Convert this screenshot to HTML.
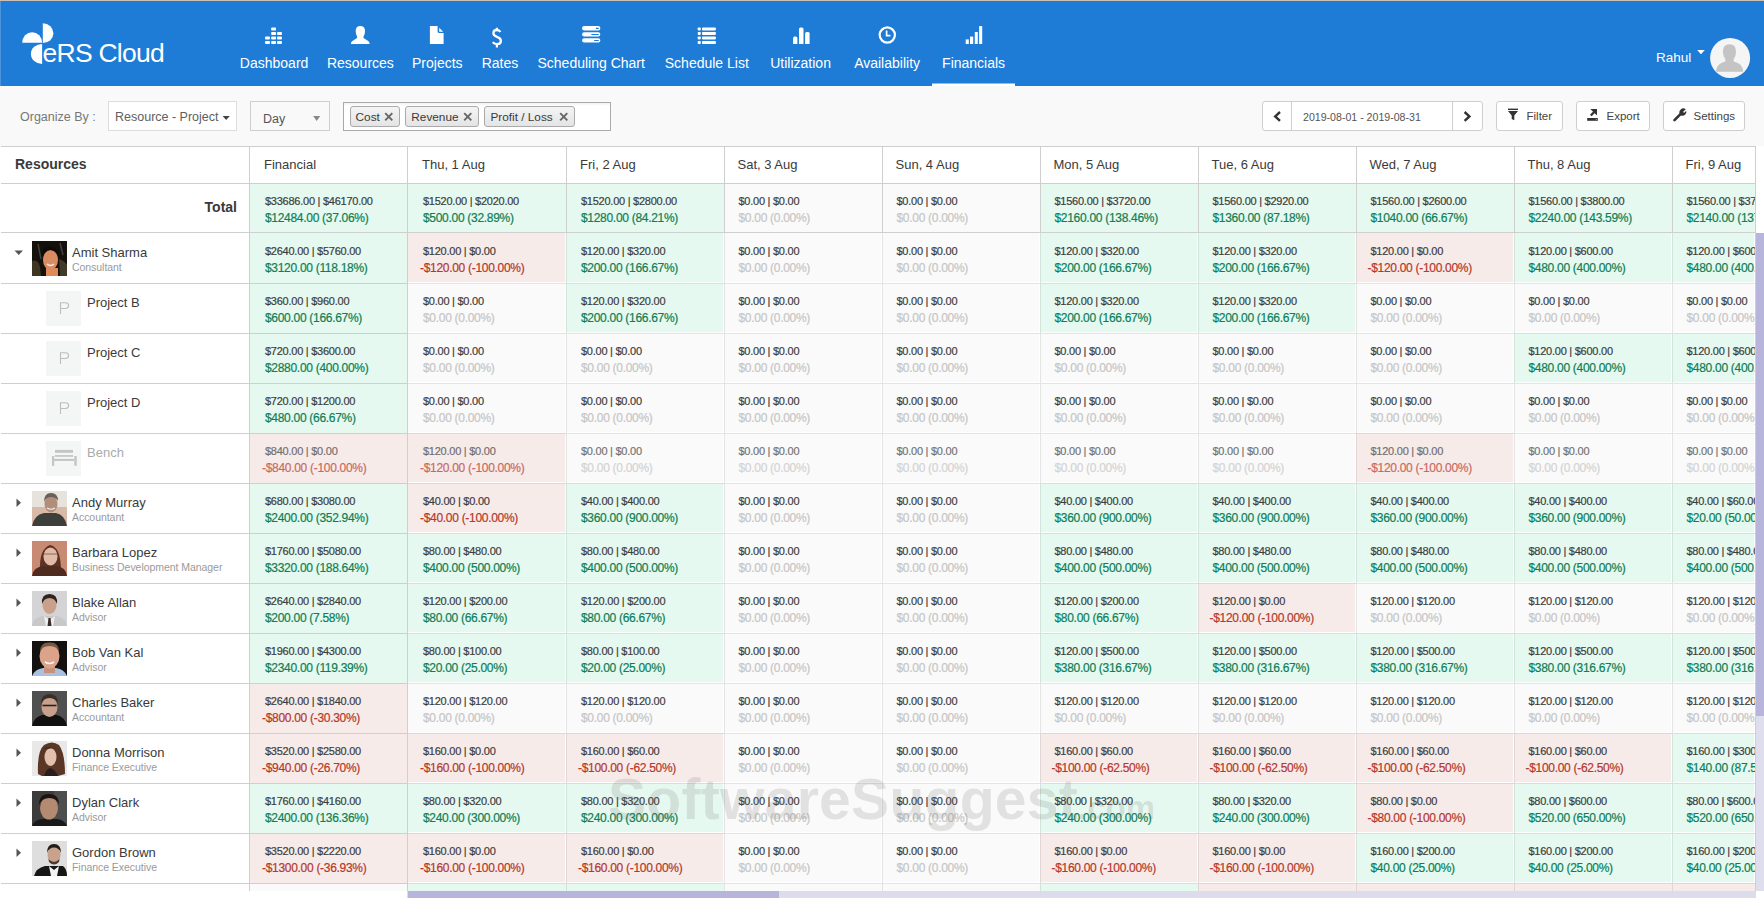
<!DOCTYPE html><html><head><meta charset="utf-8"><style>
*{box-sizing:border-box;margin:0;padding:0}
html,body{width:1764px;height:898px;overflow:hidden;background:#fff;font-family:"Liberation Sans",sans-serif}
.a{position:absolute}
#top{left:0;top:0;width:1764px;height:1px;background:#cdbfb6}
#hdr{left:0;top:1px;width:1764px;height:85px;background:#1e7bd6}
.nav{position:absolute;top:55px;color:#fff;font-size:14px;white-space:nowrap;line-height:16px}
.ico{position:absolute}
#tb{left:0;top:86px;width:1764px;height:60px;background:#f9f9f9}
.tx{position:absolute;white-space:nowrap}
.ln{position:absolute;background:#cfcfcf}
.c{position:absolute;overflow:hidden}
.G{background:#e6f9f0}
.R{background:#f7ebea}
.N{background:#fafafa}
.l1{position:absolute;-webkit-text-stroke:0.2px currentColor;left:15px;top:12px;font-size:11px;line-height:13px;letter-spacing:-0.25px;color:#3d3d3d;white-space:nowrap}
.l2{position:absolute;-webkit-text-stroke:0.2px currentColor;left:15px;top:28px;font-size:12px;line-height:14px;letter-spacing:-0.3px;white-space:nowrap}
.G .l2{color:#0c7f55}
.R .l2{color:#b5382b}
.N .l2{color:#c6c6c6}
.hd{position:absolute;top:156.5px;font-size:13px;line-height:16px;color:#3a3a3a;white-space:nowrap}
.nm{position:absolute;left:72px;font-size:13px;line-height:15px;color:#3a3a3a;white-space:nowrap}
.ti{position:absolute;left:72px;font-size:10.5px;letter-spacing:-0.05px;line-height:12px;color:#9a9a9a;white-space:nowrap}
.btn{position:absolute;top:101px;height:30px;background:#fff;border:1px solid #cfcfcf;border-radius:3px}
</style></head><body>
<div class="a" id="top"></div><div class="a" id="hdr"></div><div class="a" style="left:0;top:1px;width:1px;height:85px;background:#4b94dc"></div>
<svg class="a" style="left:0;top:0" width="200" height="86" viewBox="0 0 200 86"><path d="M42.8 23.3 A10.6 9.9 0 0 1 42.8 43.1 Z" fill="#fff"/><path d="M22.2 42.8 A9.95 10.6 0 0 1 42.1 42.8 Z" fill="#fff"/><path d="M42.1 43.9 A11.2 10.05 0 0 0 42.1 64 Z" fill="#fff"/></svg>
<div class="tx" style="left:42.5px;top:38px;font-size:26.5px;line-height:30px;color:#fff;letter-spacing:-0.75px">eRS Cloud</div>
<div class="nav" style="left:194.10000000000002px;width:160px;text-align:center">Dashboard</div>
<div class="nav" style="left:280.4px;width:160px;text-align:center">Resources</div>
<div class="nav" style="left:357.3px;width:160px;text-align:center">Projects</div>
<div class="nav" style="left:420px;width:160px;text-align:center">Rates</div>
<div class="nav" style="left:511.20000000000005px;width:160px;text-align:center">Scheduling Chart</div>
<div class="nav" style="left:626.8px;width:160px;text-align:center">Schedule List</div>
<div class="nav" style="left:720.6px;width:160px;text-align:center">Utilization</div>
<div class="nav" style="left:807.1px;width:160px;text-align:center">Availability</div>
<div class="nav" style="left:893.6px;width:160px;text-align:center">Financials</div>
<svg class="a" style="left:0;top:0" width="1764" height="86" viewBox="0 0 1764 86"><rect x="265.1" y="41.1" width="4.8" height="2.9" rx="0.7" fill="#fff"/><rect x="265.1" y="36.5" width="4.8" height="2.9" rx="0.7" fill="#fff"/><rect x="271.2" y="41.1" width="4.8" height="2.9" rx="0.7" fill="#fff"/><rect x="271.2" y="36.5" width="4.8" height="2.9" rx="0.7" fill="#fff"/><rect x="271.2" y="32" width="4.8" height="2.9" rx="0.7" fill="#fff"/><rect x="271.2" y="27.5" width="4.8" height="2.9" rx="0.7" fill="#fff"/><rect x="277.1" y="41.1" width="4.8" height="2.9" rx="0.7" fill="#fff"/><rect x="277.1" y="36.5" width="4.8" height="2.9" rx="0.7" fill="#fff"/><rect x="277.1" y="32" width="4.8" height="2.9" rx="0.7" fill="#fff"/><path d="M355.7 31 Q355.7 25.9 360.3 25.9 Q365 25.9 365 31 Q365 35 363.5 36.4 L363.5 38 L368.2 40.9 Q369.6 41.9 369.6 44 L350.9 44 Q350.9 41.9 352.4 40.9 L357.1 38 L357.1 36.4 Q355.7 35 355.7 31 Z" fill="#fff"/><path d="M429.9 25.9 H437.6 V31.6 Q437.6 33 439 33 H443.6 V43.9 H429.9 Z" fill="#fff"/><path d="M439.2 27.7 L443.2 31.8 L439.2 31.8 Z" fill="#fff"/><rect x="582.1" y="26.1" width="18.2" height="4.3" rx="2" fill="#fff"/><rect x="582.1" y="32.3" width="18.2" height="4.3" rx="2" fill="#fff"/><rect x="582.1" y="38.3" width="18.2" height="4.3" rx="2" fill="#fff"/><rect x="595.8" y="27.7" width="3.1" height="1.2" rx=".6" fill="#1e7bd6"/><rect x="591.2" y="33.9" width="7.7" height="1.2" rx=".6" fill="#1e7bd6"/><rect x="594" y="39.9" width="4.9" height="1.2" rx=".6" fill="#1e7bd6"/><rect x="697.7" y="27.5" width="3.1" height="2.9" rx=".8" fill="#fff"/><rect x="702" y="27.5" width="13.9" height="2.9" rx=".8" fill="#fff"/><rect x="697.7" y="32" width="3.1" height="2.9" rx=".8" fill="#fff"/><rect x="702" y="32" width="13.9" height="2.9" rx=".8" fill="#fff"/><rect x="697.7" y="36.5" width="3.1" height="2.9" rx=".8" fill="#fff"/><rect x="702" y="36.5" width="13.9" height="2.9" rx=".8" fill="#fff"/><rect x="697.7" y="41.1" width="3.1" height="2.9" rx=".8" fill="#fff"/><rect x="702" y="41.1" width="13.9" height="2.9" rx=".8" fill="#fff"/><path d="M793.1 44 V38 Q793.1 36.5 794.6 36.5 H795.9 Q797.4 36.5 797.4 38 V44 Z" fill="#fff"/><path d="M799 44 V28.9 Q799 27.4 800.5 27.4 H802 Q803.5 27.4 803.5 28.9 V44 Z" fill="#fff"/><path d="M805.1 44 V33.5 Q805.1 32 806.6 32 H808.1 Q809.6 32 809.6 33.5 V44 Z" fill="#fff"/><circle cx="887.3" cy="35" r="7.6" fill="none" stroke="#fff" stroke-width="2.2"/><path d="M886.6 30.4 L886.6 35.6 L890.5 35.6" fill="none" stroke="#fff" stroke-width="1.7"/><rect x="965.7" y="39.4" width="3.1" height="4.6" fill="#fff"/><rect x="970" y="36.6" width="3.2" height="7.4" fill="#fff"/><rect x="974.8" y="32" width="3" height="12" fill="#fff"/><rect x="979.1" y="26.1" width="3.1" height="17.9" fill="#fff"/><rect x="932" y="83.5" width="83" height="2.5" fill="#fff"/><path d="M1697.2 50 L1704.8 50 L1701 54.2 Z" fill="#fff"/><circle cx="1730.1" cy="57.9" r="20" fill="#f5f5f5"/><path d="M1722.9 51.5 Q1722.9 44.2 1729.5 44.2 Q1736 44.2 1736 51.5 Q1736 56.5 1733.5 59.5 L1733.8 61.5 Q1743 63.5 1743.2 71.7 L1716 71.7 Q1716.2 63.5 1725.2 61.5 L1725.5 59.5 Q1722.9 56.5 1722.9 51.5 Z" fill="#c4c4c4"/></svg>
<div class="tx" style="left:1726px;top:31px;width:10px;height:14px;font-size:19px;line-height:20px;color:#fff;text-align:center"></div>
<svg class="a" style="left:0;top:0" width="1764" height="86"><path d="M500.4 32 Q499.2 30 496.9 30 Q493.4 30 493.4 33.3 Q493.4 35.6 497 36.8 Q500.9 38.1 500.9 41 Q500.9 44.1 497 44.1 Q494.2 44.1 492.8 42.1" fill="none" stroke="#fff" stroke-width="2.3"/><path d="M496.9 27.8 V30.5 M496.9 43.5 V47.6" stroke="#fff" stroke-width="2.2"/></svg>
<div class="tx" style="left:1656px;top:50px;font-size:13.5px;line-height:16px;color:#fff">Rahul</div>
<div class="a" id="tb"></div>
<div class="tx" style="left:20px;top:109px;font-size:12.5px;line-height:16px;color:#777">Organize By :</div>
<div class="a" style="left:108px;top:101px;width:129px;height:30px;background:#fff;border:1px solid #ddd"></div>
<div class="tx" style="left:115px;top:109px;font-size:12.5px;line-height:16px;color:#606060">Resource - Project</div>
<div class="a" style="left:250px;top:101px;width:80px;height:30px;border:1px solid #cfcfcf;background:#f9f9f9"></div>
<div class="tx" style="left:263px;top:111px;font-size:12.5px;line-height:16px;color:#555">Day</div>
<svg class="a" style="left:0;top:0" width="1764" height="146"><path d="M222.6 116 L229.8 116 L226.2 120 Z" fill="#444"/><path d="M313.2 116 L320.2 116 L316.7 121 Z" fill="#888"/></svg>
<div class="a" style="left:343px;top:102px;width:268px;height:29px;border:1px solid #aaa;background:linear-gradient(#f0f0f0 0,#fff 3px)"></div>
<div class="a" style="left:349.6px;top:106px;width:50.099999999999966px;height:21px;border:1px solid #aaa;border-radius:3px;background:linear-gradient(#f4f4f4,#e4e4e4)"></div>
<div class="tx" style="left:355.6px;top:109px;font-size:11.8px;line-height:16px;color:#3a3a3a">Cost</div>
<svg class="a" style="left:384.2px;top:112px" width="10" height="10"><path d="M1.2 1.2 L8.3 8.3 M8.3 1.2 L1.2 8.3" stroke="#666" stroke-width="1.9"/></svg>
<div class="a" style="left:405.3px;top:106px;width:73.5px;height:21px;border:1px solid #aaa;border-radius:3px;background:linear-gradient(#f4f4f4,#e4e4e4)"></div>
<div class="tx" style="left:411.3px;top:109px;font-size:11.8px;line-height:16px;color:#3a3a3a">Revenue</div>
<svg class="a" style="left:463.3px;top:112px" width="10" height="10"><path d="M1.2 1.2 L8.3 8.3 M8.3 1.2 L1.2 8.3" stroke="#666" stroke-width="1.9"/></svg>
<div class="a" style="left:484.4px;top:106px;width:90.20000000000005px;height:21px;border:1px solid #aaa;border-radius:3px;background:linear-gradient(#f4f4f4,#e4e4e4)"></div>
<div class="tx" style="left:490.4px;top:109px;font-size:11.8px;line-height:16px;color:#3a3a3a">Profit / Loss</div>
<svg class="a" style="left:559.1px;top:112px" width="10" height="10"><path d="M1.2 1.2 L8.3 8.3 M8.3 1.2 L1.2 8.3" stroke="#666" stroke-width="1.9"/></svg>
<div class="a" style="left:1262px;top:101px;width:221px;height:30px;border:1px solid #cfcfcf;border-radius:3px;background:#fff"></div>
<div class="a" style="left:1291px;top:101px;width:1px;height:30px;background:#cfcfcf"></div>
<div class="a" style="left:1452px;top:101px;width:1px;height:30px;background:#cfcfcf"></div>
<svg class="a" style="left:0;top:0" width="1764" height="146"><path d="M1280 112 L1275.2 116.4 L1280 120.8" fill="none" stroke="#333" stroke-width="2.4"/><path d="M1464.6 112 L1469.4 116.4 L1464.6 120.8" fill="none" stroke="#333" stroke-width="2.4"/></svg>
<div class="tx" style="left:1303px;top:110px;font-size:10.6px;line-height:14px;color:#555">2019-08-01 - 2019-08-31</div>
<div class="btn" style="left:1496px;width:67px"></div>
<div class="tx" style="left:1526.5px;top:108px;font-size:11.5px;line-height:16px;color:#444">Filter</div>
<div class="btn" style="left:1576px;width:74px"></div>
<div class="tx" style="left:1606.5px;top:108px;font-size:11.5px;line-height:16px;color:#444">Export</div>
<div class="btn" style="left:1663px;width:82px"></div>
<div class="tx" style="left:1693.5px;top:108px;font-size:11.5px;line-height:16px;color:#444">Settings</div>
<svg class="a" style="left:0;top:0" width="1764" height="146"><rect x="1508" y="108.6" width="10" height="1.4" fill="#333"/><path d="M1508 111 L1518 111 L1514.3 115.5 L1514.3 120.3 L1511.7 119 L1511.7 115.5 Z" fill="#333"/><rect x="1587.2" y="118" width="10.6" height="2.8" fill="#333"/><circle cx="1596.3" cy="119.4" r=".7" fill="#999"/><path d="M1590.3 109.1 L1597 109.1 L1597 115.6 Z" fill="#333"/><path d="M1595 111.2 L1590.8 115.5" stroke="#333" stroke-width="2.3"/><path d="M1674.5 120.2 L1681 113.7" stroke="#333" stroke-width="2.6" stroke-linecap="round"/><path d="M1680 114.5 A4 4 0 0 1 1685.8 109.2 L1683.2 111.8 L1684 113 L1686.3 110.8 A4 4 0 0 1 1681 115.5 Z" fill="#333"/></svg>
<div class="c G" style="left:250px;top:184px;width:157px;height:48px"><div class="l1" style="left:15px;top:11px">$33686.00 | $46170.00</div><div class="l2" style="left:15px;top:27px">$12484.00 (37.06%)</div></div>
<div class="c G" style="left:408px;top:184px;width:158px;height:48px"><div class="l1" style="left:15px;top:11px">$1520.00 | $2020.00</div><div class="l2" style="left:15px;top:27px">$500.00 (32.89%)</div></div>
<div class="c G" style="left:567px;top:184px;width:157px;height:48px"><div class="l1" style="left:14px;top:11px">$1520.00 | $2800.00</div><div class="l2" style="left:14px;top:27px">$1280.00 (84.21%)</div></div>
<div class="c N" style="left:725px;top:184px;width:157px;height:48px"><div class="l1" style="left:13.5px;top:11px">$0.00 | $0.00</div><div class="l2" style="left:13.5px;top:27px">$0.00 (0.00%)</div></div>
<div class="c N" style="left:883px;top:184px;width:157px;height:48px"><div class="l1" style="left:13.5px;top:11px">$0.00 | $0.00</div><div class="l2" style="left:13.5px;top:27px">$0.00 (0.00%)</div></div>
<div class="c G" style="left:1041px;top:184px;width:157px;height:48px"><div class="l1" style="left:13.5px;top:11px">$1560.00 | $3720.00</div><div class="l2" style="left:13.5px;top:27px">$2160.00 (138.46%)</div></div>
<div class="c G" style="left:1199px;top:184px;width:157px;height:48px"><div class="l1" style="left:13.5px;top:11px">$1560.00 | $2920.00</div><div class="l2" style="left:13.5px;top:27px">$1360.00 (87.18%)</div></div>
<div class="c G" style="left:1357px;top:184px;width:157px;height:48px"><div class="l1" style="left:13.5px;top:11px">$1560.00 | $2600.00</div><div class="l2" style="left:13.5px;top:27px">$1040.00 (66.67%)</div></div>
<div class="c G" style="left:1515px;top:184px;width:157px;height:48px"><div class="l1" style="left:13.5px;top:11px">$1560.00 | $3800.00</div><div class="l2" style="left:13.5px;top:27px">$2240.00 (143.59%)</div></div>
<div class="c G" style="left:1673px;top:184px;width:82px;height:48px"><div class="l1" style="left:13.5px;top:11px">$1560.00 | $3700.00</div><div class="l2" style="left:13.5px;top:27px">$2140.00 (137.18%)</div></div>
<div class="c G" style="left:250px;top:233px;width:157px;height:50px"><div class="l1" style="left:15px;top:12px">$2640.00 | $5760.00</div><div class="l2" style="left:15px;top:28px">$3120.00 (118.18%)</div></div>
<div class="c R" style="left:407px;top:232px;width:159px;height:51px;border-left:1px solid rgba(0,0,0,.085);border-top:1px solid rgba(0,0,0,.085);box-shadow:inset -1px -1px 0 rgba(255,255,255,.85)"><div class="l1" style="left:15px;top:12px">$120.00 | $0.00</div><div class="l2" style="left:12px;top:28px">-$120.00 (-100.00%)</div></div>
<div class="c G" style="left:566px;top:232px;width:158px;height:51px;border-left:1px solid rgba(0,0,0,.085);border-top:1px solid rgba(0,0,0,.085);box-shadow:inset -1px -1px 0 rgba(255,255,255,.85)"><div class="l1" style="left:14px;top:12px">$120.00 | $320.00</div><div class="l2" style="left:14px;top:28px">$200.00 (166.67%)</div></div>
<div class="c N" style="left:724px;top:232px;width:158px;height:51px;border-left:1px solid rgba(0,0,0,.085);border-top:1px solid rgba(0,0,0,.085);box-shadow:inset -1px -1px 0 rgba(255,255,255,.85)"><div class="l1" style="left:13.5px;top:12px">$0.00 | $0.00</div><div class="l2" style="left:13.5px;top:28px">$0.00 (0.00%)</div></div>
<div class="c N" style="left:882px;top:232px;width:158px;height:51px;border-left:1px solid rgba(0,0,0,.085);border-top:1px solid rgba(0,0,0,.085);box-shadow:inset -1px -1px 0 rgba(255,255,255,.85)"><div class="l1" style="left:13.5px;top:12px">$0.00 | $0.00</div><div class="l2" style="left:13.5px;top:28px">$0.00 (0.00%)</div></div>
<div class="c G" style="left:1040px;top:232px;width:158px;height:51px;border-left:1px solid rgba(0,0,0,.085);border-top:1px solid rgba(0,0,0,.085);box-shadow:inset -1px -1px 0 rgba(255,255,255,.85)"><div class="l1" style="left:13.5px;top:12px">$120.00 | $320.00</div><div class="l2" style="left:13.5px;top:28px">$200.00 (166.67%)</div></div>
<div class="c G" style="left:1198px;top:232px;width:158px;height:51px;border-left:1px solid rgba(0,0,0,.085);border-top:1px solid rgba(0,0,0,.085);box-shadow:inset -1px -1px 0 rgba(255,255,255,.85)"><div class="l1" style="left:13.5px;top:12px">$120.00 | $320.00</div><div class="l2" style="left:13.5px;top:28px">$200.00 (166.67%)</div></div>
<div class="c R" style="left:1356px;top:232px;width:158px;height:51px;border-left:1px solid rgba(0,0,0,.085);border-top:1px solid rgba(0,0,0,.085);box-shadow:inset -1px -1px 0 rgba(255,255,255,.85)"><div class="l1" style="left:13.5px;top:12px">$120.00 | $0.00</div><div class="l2" style="left:10.5px;top:28px">-$120.00 (-100.00%)</div></div>
<div class="c G" style="left:1514px;top:232px;width:158px;height:51px;border-left:1px solid rgba(0,0,0,.085);border-top:1px solid rgba(0,0,0,.085);box-shadow:inset -1px -1px 0 rgba(255,255,255,.85)"><div class="l1" style="left:13.5px;top:12px">$120.00 | $600.00</div><div class="l2" style="left:13.5px;top:28px">$480.00 (400.00%)</div></div>
<div class="c G" style="left:1672px;top:232px;width:83px;height:51px;border-left:1px solid rgba(0,0,0,.085);border-top:1px solid rgba(0,0,0,.085);box-shadow:inset -1px -1px 0 rgba(255,255,255,.85)"><div class="l1" style="left:13.5px;top:12px">$120.00 | $600.00</div><div class="l2" style="left:13.5px;top:28px">$480.00 (400.00%)</div></div>
<div class="c G" style="left:250px;top:284px;width:157px;height:49px"><div class="l1" style="left:15px;top:11px">$360.00 | $960.00</div><div class="l2" style="left:15px;top:27px">$600.00 (166.67%)</div></div>
<div class="c N" style="left:407px;top:283px;width:159px;height:50px;border-left:1px solid rgba(0,0,0,.085);border-top:1px solid rgba(0,0,0,.085);box-shadow:inset -1px -1px 0 rgba(255,255,255,.85)"><div class="l1" style="left:15px;top:11px">$0.00 | $0.00</div><div class="l2" style="left:15px;top:27px">$0.00 (0.00%)</div></div>
<div class="c G" style="left:566px;top:283px;width:158px;height:50px;border-left:1px solid rgba(0,0,0,.085);border-top:1px solid rgba(0,0,0,.085);box-shadow:inset -1px -1px 0 rgba(255,255,255,.85)"><div class="l1" style="left:14px;top:11px">$120.00 | $320.00</div><div class="l2" style="left:14px;top:27px">$200.00 (166.67%)</div></div>
<div class="c N" style="left:724px;top:283px;width:158px;height:50px;border-left:1px solid rgba(0,0,0,.085);border-top:1px solid rgba(0,0,0,.085);box-shadow:inset -1px -1px 0 rgba(255,255,255,.85)"><div class="l1" style="left:13.5px;top:11px">$0.00 | $0.00</div><div class="l2" style="left:13.5px;top:27px">$0.00 (0.00%)</div></div>
<div class="c N" style="left:882px;top:283px;width:158px;height:50px;border-left:1px solid rgba(0,0,0,.085);border-top:1px solid rgba(0,0,0,.085);box-shadow:inset -1px -1px 0 rgba(255,255,255,.85)"><div class="l1" style="left:13.5px;top:11px">$0.00 | $0.00</div><div class="l2" style="left:13.5px;top:27px">$0.00 (0.00%)</div></div>
<div class="c G" style="left:1040px;top:283px;width:158px;height:50px;border-left:1px solid rgba(0,0,0,.085);border-top:1px solid rgba(0,0,0,.085);box-shadow:inset -1px -1px 0 rgba(255,255,255,.85)"><div class="l1" style="left:13.5px;top:11px">$120.00 | $320.00</div><div class="l2" style="left:13.5px;top:27px">$200.00 (166.67%)</div></div>
<div class="c G" style="left:1198px;top:283px;width:158px;height:50px;border-left:1px solid rgba(0,0,0,.085);border-top:1px solid rgba(0,0,0,.085);box-shadow:inset -1px -1px 0 rgba(255,255,255,.85)"><div class="l1" style="left:13.5px;top:11px">$120.00 | $320.00</div><div class="l2" style="left:13.5px;top:27px">$200.00 (166.67%)</div></div>
<div class="c N" style="left:1356px;top:283px;width:158px;height:50px;border-left:1px solid rgba(0,0,0,.085);border-top:1px solid rgba(0,0,0,.085);box-shadow:inset -1px -1px 0 rgba(255,255,255,.85)"><div class="l1" style="left:13.5px;top:11px">$0.00 | $0.00</div><div class="l2" style="left:13.5px;top:27px">$0.00 (0.00%)</div></div>
<div class="c N" style="left:1514px;top:283px;width:158px;height:50px;border-left:1px solid rgba(0,0,0,.085);border-top:1px solid rgba(0,0,0,.085);box-shadow:inset -1px -1px 0 rgba(255,255,255,.85)"><div class="l1" style="left:13.5px;top:11px">$0.00 | $0.00</div><div class="l2" style="left:13.5px;top:27px">$0.00 (0.00%)</div></div>
<div class="c N" style="left:1672px;top:283px;width:83px;height:50px;border-left:1px solid rgba(0,0,0,.085);border-top:1px solid rgba(0,0,0,.085);box-shadow:inset -1px -1px 0 rgba(255,255,255,.85)"><div class="l1" style="left:13.5px;top:11px">$0.00 | $0.00</div><div class="l2" style="left:13.5px;top:27px">$0.00 (0.00%)</div></div>
<div class="c G" style="left:250px;top:334px;width:157px;height:49px"><div class="l1" style="left:15px;top:11px">$720.00 | $3600.00</div><div class="l2" style="left:15px;top:27px">$2880.00 (400.00%)</div></div>
<div class="c N" style="left:407px;top:333px;width:159px;height:50px;border-left:1px solid rgba(0,0,0,.085);border-top:1px solid rgba(0,0,0,.085);box-shadow:inset -1px -1px 0 rgba(255,255,255,.85)"><div class="l1" style="left:15px;top:11px">$0.00 | $0.00</div><div class="l2" style="left:15px;top:27px">$0.00 (0.00%)</div></div>
<div class="c N" style="left:566px;top:333px;width:158px;height:50px;border-left:1px solid rgba(0,0,0,.085);border-top:1px solid rgba(0,0,0,.085);box-shadow:inset -1px -1px 0 rgba(255,255,255,.85)"><div class="l1" style="left:14px;top:11px">$0.00 | $0.00</div><div class="l2" style="left:14px;top:27px">$0.00 (0.00%)</div></div>
<div class="c N" style="left:724px;top:333px;width:158px;height:50px;border-left:1px solid rgba(0,0,0,.085);border-top:1px solid rgba(0,0,0,.085);box-shadow:inset -1px -1px 0 rgba(255,255,255,.85)"><div class="l1" style="left:13.5px;top:11px">$0.00 | $0.00</div><div class="l2" style="left:13.5px;top:27px">$0.00 (0.00%)</div></div>
<div class="c N" style="left:882px;top:333px;width:158px;height:50px;border-left:1px solid rgba(0,0,0,.085);border-top:1px solid rgba(0,0,0,.085);box-shadow:inset -1px -1px 0 rgba(255,255,255,.85)"><div class="l1" style="left:13.5px;top:11px">$0.00 | $0.00</div><div class="l2" style="left:13.5px;top:27px">$0.00 (0.00%)</div></div>
<div class="c N" style="left:1040px;top:333px;width:158px;height:50px;border-left:1px solid rgba(0,0,0,.085);border-top:1px solid rgba(0,0,0,.085);box-shadow:inset -1px -1px 0 rgba(255,255,255,.85)"><div class="l1" style="left:13.5px;top:11px">$0.00 | $0.00</div><div class="l2" style="left:13.5px;top:27px">$0.00 (0.00%)</div></div>
<div class="c N" style="left:1198px;top:333px;width:158px;height:50px;border-left:1px solid rgba(0,0,0,.085);border-top:1px solid rgba(0,0,0,.085);box-shadow:inset -1px -1px 0 rgba(255,255,255,.85)"><div class="l1" style="left:13.5px;top:11px">$0.00 | $0.00</div><div class="l2" style="left:13.5px;top:27px">$0.00 (0.00%)</div></div>
<div class="c N" style="left:1356px;top:333px;width:158px;height:50px;border-left:1px solid rgba(0,0,0,.085);border-top:1px solid rgba(0,0,0,.085);box-shadow:inset -1px -1px 0 rgba(255,255,255,.85)"><div class="l1" style="left:13.5px;top:11px">$0.00 | $0.00</div><div class="l2" style="left:13.5px;top:27px">$0.00 (0.00%)</div></div>
<div class="c G" style="left:1514px;top:333px;width:158px;height:50px;border-left:1px solid rgba(0,0,0,.085);border-top:1px solid rgba(0,0,0,.085);box-shadow:inset -1px -1px 0 rgba(255,255,255,.85)"><div class="l1" style="left:13.5px;top:11px">$120.00 | $600.00</div><div class="l2" style="left:13.5px;top:27px">$480.00 (400.00%)</div></div>
<div class="c G" style="left:1672px;top:333px;width:83px;height:50px;border-left:1px solid rgba(0,0,0,.085);border-top:1px solid rgba(0,0,0,.085);box-shadow:inset -1px -1px 0 rgba(255,255,255,.85)"><div class="l1" style="left:13.5px;top:11px">$120.00 | $600.00</div><div class="l2" style="left:13.5px;top:27px">$480.00 (400.00%)</div></div>
<div class="c G" style="left:250px;top:384px;width:157px;height:49px"><div class="l1" style="left:15px;top:11px">$720.00 | $1200.00</div><div class="l2" style="left:15px;top:27px">$480.00 (66.67%)</div></div>
<div class="c N" style="left:407px;top:383px;width:159px;height:50px;border-left:1px solid rgba(0,0,0,.085);border-top:1px solid rgba(0,0,0,.085);box-shadow:inset -1px -1px 0 rgba(255,255,255,.85)"><div class="l1" style="left:15px;top:11px">$0.00 | $0.00</div><div class="l2" style="left:15px;top:27px">$0.00 (0.00%)</div></div>
<div class="c N" style="left:566px;top:383px;width:158px;height:50px;border-left:1px solid rgba(0,0,0,.085);border-top:1px solid rgba(0,0,0,.085);box-shadow:inset -1px -1px 0 rgba(255,255,255,.85)"><div class="l1" style="left:14px;top:11px">$0.00 | $0.00</div><div class="l2" style="left:14px;top:27px">$0.00 (0.00%)</div></div>
<div class="c N" style="left:724px;top:383px;width:158px;height:50px;border-left:1px solid rgba(0,0,0,.085);border-top:1px solid rgba(0,0,0,.085);box-shadow:inset -1px -1px 0 rgba(255,255,255,.85)"><div class="l1" style="left:13.5px;top:11px">$0.00 | $0.00</div><div class="l2" style="left:13.5px;top:27px">$0.00 (0.00%)</div></div>
<div class="c N" style="left:882px;top:383px;width:158px;height:50px;border-left:1px solid rgba(0,0,0,.085);border-top:1px solid rgba(0,0,0,.085);box-shadow:inset -1px -1px 0 rgba(255,255,255,.85)"><div class="l1" style="left:13.5px;top:11px">$0.00 | $0.00</div><div class="l2" style="left:13.5px;top:27px">$0.00 (0.00%)</div></div>
<div class="c N" style="left:1040px;top:383px;width:158px;height:50px;border-left:1px solid rgba(0,0,0,.085);border-top:1px solid rgba(0,0,0,.085);box-shadow:inset -1px -1px 0 rgba(255,255,255,.85)"><div class="l1" style="left:13.5px;top:11px">$0.00 | $0.00</div><div class="l2" style="left:13.5px;top:27px">$0.00 (0.00%)</div></div>
<div class="c N" style="left:1198px;top:383px;width:158px;height:50px;border-left:1px solid rgba(0,0,0,.085);border-top:1px solid rgba(0,0,0,.085);box-shadow:inset -1px -1px 0 rgba(255,255,255,.85)"><div class="l1" style="left:13.5px;top:11px">$0.00 | $0.00</div><div class="l2" style="left:13.5px;top:27px">$0.00 (0.00%)</div></div>
<div class="c N" style="left:1356px;top:383px;width:158px;height:50px;border-left:1px solid rgba(0,0,0,.085);border-top:1px solid rgba(0,0,0,.085);box-shadow:inset -1px -1px 0 rgba(255,255,255,.85)"><div class="l1" style="left:13.5px;top:11px">$0.00 | $0.00</div><div class="l2" style="left:13.5px;top:27px">$0.00 (0.00%)</div></div>
<div class="c N" style="left:1514px;top:383px;width:158px;height:50px;border-left:1px solid rgba(0,0,0,.085);border-top:1px solid rgba(0,0,0,.085);box-shadow:inset -1px -1px 0 rgba(255,255,255,.85)"><div class="l1" style="left:13.5px;top:11px">$0.00 | $0.00</div><div class="l2" style="left:13.5px;top:27px">$0.00 (0.00%)</div></div>
<div class="c N" style="left:1672px;top:383px;width:83px;height:50px;border-left:1px solid rgba(0,0,0,.085);border-top:1px solid rgba(0,0,0,.085);box-shadow:inset -1px -1px 0 rgba(255,255,255,.85)"><div class="l1" style="left:13.5px;top:11px">$0.00 | $0.00</div><div class="l2" style="left:13.5px;top:27px">$0.00 (0.00%)</div></div>
<div class="c R" style="left:250px;top:434px;width:157px;height:49px"><div class="l1" style="left:15px;top:11px;opacity:.72">$840.00 | $0.00</div><div class="l2" style="left:12px;top:27px;opacity:.72">-$840.00 (-100.00%)</div></div>
<div class="c R" style="left:407px;top:433px;width:159px;height:50px;border-left:1px solid rgba(0,0,0,.085);border-top:1px solid rgba(0,0,0,.085);box-shadow:inset -1px -1px 0 rgba(255,255,255,.85)"><div class="l1" style="left:15px;top:11px;opacity:.72">$120.00 | $0.00</div><div class="l2" style="left:12px;top:27px;opacity:.72">-$120.00 (-100.00%)</div></div>
<div class="c N" style="left:566px;top:433px;width:158px;height:50px;border-left:1px solid rgba(0,0,0,.085);border-top:1px solid rgba(0,0,0,.085);box-shadow:inset -1px -1px 0 rgba(255,255,255,.85)"><div class="l1" style="left:14px;top:11px;opacity:.72">$0.00 | $0.00</div><div class="l2" style="left:14px;top:27px;opacity:.72">$0.00 (0.00%)</div></div>
<div class="c N" style="left:724px;top:433px;width:158px;height:50px;border-left:1px solid rgba(0,0,0,.085);border-top:1px solid rgba(0,0,0,.085);box-shadow:inset -1px -1px 0 rgba(255,255,255,.85)"><div class="l1" style="left:13.5px;top:11px;opacity:.72">$0.00 | $0.00</div><div class="l2" style="left:13.5px;top:27px;opacity:.72">$0.00 (0.00%)</div></div>
<div class="c N" style="left:882px;top:433px;width:158px;height:50px;border-left:1px solid rgba(0,0,0,.085);border-top:1px solid rgba(0,0,0,.085);box-shadow:inset -1px -1px 0 rgba(255,255,255,.85)"><div class="l1" style="left:13.5px;top:11px;opacity:.72">$0.00 | $0.00</div><div class="l2" style="left:13.5px;top:27px;opacity:.72">$0.00 (0.00%)</div></div>
<div class="c N" style="left:1040px;top:433px;width:158px;height:50px;border-left:1px solid rgba(0,0,0,.085);border-top:1px solid rgba(0,0,0,.085);box-shadow:inset -1px -1px 0 rgba(255,255,255,.85)"><div class="l1" style="left:13.5px;top:11px;opacity:.72">$0.00 | $0.00</div><div class="l2" style="left:13.5px;top:27px;opacity:.72">$0.00 (0.00%)</div></div>
<div class="c N" style="left:1198px;top:433px;width:158px;height:50px;border-left:1px solid rgba(0,0,0,.085);border-top:1px solid rgba(0,0,0,.085);box-shadow:inset -1px -1px 0 rgba(255,255,255,.85)"><div class="l1" style="left:13.5px;top:11px;opacity:.72">$0.00 | $0.00</div><div class="l2" style="left:13.5px;top:27px;opacity:.72">$0.00 (0.00%)</div></div>
<div class="c R" style="left:1356px;top:433px;width:158px;height:50px;border-left:1px solid rgba(0,0,0,.085);border-top:1px solid rgba(0,0,0,.085);box-shadow:inset -1px -1px 0 rgba(255,255,255,.85)"><div class="l1" style="left:13.5px;top:11px;opacity:.72">$120.00 | $0.00</div><div class="l2" style="left:10.5px;top:27px;opacity:.72">-$120.00 (-100.00%)</div></div>
<div class="c N" style="left:1514px;top:433px;width:158px;height:50px;border-left:1px solid rgba(0,0,0,.085);border-top:1px solid rgba(0,0,0,.085);box-shadow:inset -1px -1px 0 rgba(255,255,255,.85)"><div class="l1" style="left:13.5px;top:11px;opacity:.72">$0.00 | $0.00</div><div class="l2" style="left:13.5px;top:27px;opacity:.72">$0.00 (0.00%)</div></div>
<div class="c N" style="left:1672px;top:433px;width:83px;height:50px;border-left:1px solid rgba(0,0,0,.085);border-top:1px solid rgba(0,0,0,.085);box-shadow:inset -1px -1px 0 rgba(255,255,255,.85)"><div class="l1" style="left:13.5px;top:11px;opacity:.72">$0.00 | $0.00</div><div class="l2" style="left:13.5px;top:27px;opacity:.72">$0.00 (0.00%)</div></div>
<div class="c G" style="left:250px;top:484px;width:157px;height:49px"><div class="l1" style="left:15px;top:11px">$680.00 | $3080.00</div><div class="l2" style="left:15px;top:27px">$2400.00 (352.94%)</div></div>
<div class="c R" style="left:407px;top:483px;width:159px;height:50px;border-left:1px solid rgba(0,0,0,.085);border-top:1px solid rgba(0,0,0,.085);box-shadow:inset -1px -1px 0 rgba(255,255,255,.85)"><div class="l1" style="left:15px;top:11px">$40.00 | $0.00</div><div class="l2" style="left:12px;top:27px">-$40.00 (-100.00%)</div></div>
<div class="c G" style="left:566px;top:483px;width:158px;height:50px;border-left:1px solid rgba(0,0,0,.085);border-top:1px solid rgba(0,0,0,.085);box-shadow:inset -1px -1px 0 rgba(255,255,255,.85)"><div class="l1" style="left:14px;top:11px">$40.00 | $400.00</div><div class="l2" style="left:14px;top:27px">$360.00 (900.00%)</div></div>
<div class="c N" style="left:724px;top:483px;width:158px;height:50px;border-left:1px solid rgba(0,0,0,.085);border-top:1px solid rgba(0,0,0,.085);box-shadow:inset -1px -1px 0 rgba(255,255,255,.85)"><div class="l1" style="left:13.5px;top:11px">$0.00 | $0.00</div><div class="l2" style="left:13.5px;top:27px">$0.00 (0.00%)</div></div>
<div class="c N" style="left:882px;top:483px;width:158px;height:50px;border-left:1px solid rgba(0,0,0,.085);border-top:1px solid rgba(0,0,0,.085);box-shadow:inset -1px -1px 0 rgba(255,255,255,.85)"><div class="l1" style="left:13.5px;top:11px">$0.00 | $0.00</div><div class="l2" style="left:13.5px;top:27px">$0.00 (0.00%)</div></div>
<div class="c G" style="left:1040px;top:483px;width:158px;height:50px;border-left:1px solid rgba(0,0,0,.085);border-top:1px solid rgba(0,0,0,.085);box-shadow:inset -1px -1px 0 rgba(255,255,255,.85)"><div class="l1" style="left:13.5px;top:11px">$40.00 | $400.00</div><div class="l2" style="left:13.5px;top:27px">$360.00 (900.00%)</div></div>
<div class="c G" style="left:1198px;top:483px;width:158px;height:50px;border-left:1px solid rgba(0,0,0,.085);border-top:1px solid rgba(0,0,0,.085);box-shadow:inset -1px -1px 0 rgba(255,255,255,.85)"><div class="l1" style="left:13.5px;top:11px">$40.00 | $400.00</div><div class="l2" style="left:13.5px;top:27px">$360.00 (900.00%)</div></div>
<div class="c G" style="left:1356px;top:483px;width:158px;height:50px;border-left:1px solid rgba(0,0,0,.085);border-top:1px solid rgba(0,0,0,.085);box-shadow:inset -1px -1px 0 rgba(255,255,255,.85)"><div class="l1" style="left:13.5px;top:11px">$40.00 | $400.00</div><div class="l2" style="left:13.5px;top:27px">$360.00 (900.00%)</div></div>
<div class="c G" style="left:1514px;top:483px;width:158px;height:50px;border-left:1px solid rgba(0,0,0,.085);border-top:1px solid rgba(0,0,0,.085);box-shadow:inset -1px -1px 0 rgba(255,255,255,.85)"><div class="l1" style="left:13.5px;top:11px">$40.00 | $400.00</div><div class="l2" style="left:13.5px;top:27px">$360.00 (900.00%)</div></div>
<div class="c G" style="left:1672px;top:483px;width:83px;height:50px;border-left:1px solid rgba(0,0,0,.085);border-top:1px solid rgba(0,0,0,.085);box-shadow:inset -1px -1px 0 rgba(255,255,255,.85)"><div class="l1" style="left:13.5px;top:11px">$40.00 | $60.00</div><div class="l2" style="left:13.5px;top:27px">$20.00 (50.00%)</div></div>
<div class="c G" style="left:250px;top:534px;width:157px;height:49px"><div class="l1" style="left:15px;top:11px">$1760.00 | $5080.00</div><div class="l2" style="left:15px;top:27px">$3320.00 (188.64%)</div></div>
<div class="c G" style="left:407px;top:533px;width:159px;height:50px;border-left:1px solid rgba(0,0,0,.085);border-top:1px solid rgba(0,0,0,.085);box-shadow:inset -1px -1px 0 rgba(255,255,255,.85)"><div class="l1" style="left:15px;top:11px">$80.00 | $480.00</div><div class="l2" style="left:15px;top:27px">$400.00 (500.00%)</div></div>
<div class="c G" style="left:566px;top:533px;width:158px;height:50px;border-left:1px solid rgba(0,0,0,.085);border-top:1px solid rgba(0,0,0,.085);box-shadow:inset -1px -1px 0 rgba(255,255,255,.85)"><div class="l1" style="left:14px;top:11px">$80.00 | $480.00</div><div class="l2" style="left:14px;top:27px">$400.00 (500.00%)</div></div>
<div class="c N" style="left:724px;top:533px;width:158px;height:50px;border-left:1px solid rgba(0,0,0,.085);border-top:1px solid rgba(0,0,0,.085);box-shadow:inset -1px -1px 0 rgba(255,255,255,.85)"><div class="l1" style="left:13.5px;top:11px">$0.00 | $0.00</div><div class="l2" style="left:13.5px;top:27px">$0.00 (0.00%)</div></div>
<div class="c N" style="left:882px;top:533px;width:158px;height:50px;border-left:1px solid rgba(0,0,0,.085);border-top:1px solid rgba(0,0,0,.085);box-shadow:inset -1px -1px 0 rgba(255,255,255,.85)"><div class="l1" style="left:13.5px;top:11px">$0.00 | $0.00</div><div class="l2" style="left:13.5px;top:27px">$0.00 (0.00%)</div></div>
<div class="c G" style="left:1040px;top:533px;width:158px;height:50px;border-left:1px solid rgba(0,0,0,.085);border-top:1px solid rgba(0,0,0,.085);box-shadow:inset -1px -1px 0 rgba(255,255,255,.85)"><div class="l1" style="left:13.5px;top:11px">$80.00 | $480.00</div><div class="l2" style="left:13.5px;top:27px">$400.00 (500.00%)</div></div>
<div class="c G" style="left:1198px;top:533px;width:158px;height:50px;border-left:1px solid rgba(0,0,0,.085);border-top:1px solid rgba(0,0,0,.085);box-shadow:inset -1px -1px 0 rgba(255,255,255,.85)"><div class="l1" style="left:13.5px;top:11px">$80.00 | $480.00</div><div class="l2" style="left:13.5px;top:27px">$400.00 (500.00%)</div></div>
<div class="c G" style="left:1356px;top:533px;width:158px;height:50px;border-left:1px solid rgba(0,0,0,.085);border-top:1px solid rgba(0,0,0,.085);box-shadow:inset -1px -1px 0 rgba(255,255,255,.85)"><div class="l1" style="left:13.5px;top:11px">$80.00 | $480.00</div><div class="l2" style="left:13.5px;top:27px">$400.00 (500.00%)</div></div>
<div class="c G" style="left:1514px;top:533px;width:158px;height:50px;border-left:1px solid rgba(0,0,0,.085);border-top:1px solid rgba(0,0,0,.085);box-shadow:inset -1px -1px 0 rgba(255,255,255,.85)"><div class="l1" style="left:13.5px;top:11px">$80.00 | $480.00</div><div class="l2" style="left:13.5px;top:27px">$400.00 (500.00%)</div></div>
<div class="c G" style="left:1672px;top:533px;width:83px;height:50px;border-left:1px solid rgba(0,0,0,.085);border-top:1px solid rgba(0,0,0,.085);box-shadow:inset -1px -1px 0 rgba(255,255,255,.85)"><div class="l1" style="left:13.5px;top:11px">$80.00 | $480.00</div><div class="l2" style="left:13.5px;top:27px">$400.00 (500.00%)</div></div>
<div class="c G" style="left:250px;top:584px;width:157px;height:49px"><div class="l1" style="left:15px;top:11px">$2640.00 | $2840.00</div><div class="l2" style="left:15px;top:27px">$200.00 (7.58%)</div></div>
<div class="c G" style="left:407px;top:583px;width:159px;height:50px;border-left:1px solid rgba(0,0,0,.085);border-top:1px solid rgba(0,0,0,.085);box-shadow:inset -1px -1px 0 rgba(255,255,255,.85)"><div class="l1" style="left:15px;top:11px">$120.00 | $200.00</div><div class="l2" style="left:15px;top:27px">$80.00 (66.67%)</div></div>
<div class="c G" style="left:566px;top:583px;width:158px;height:50px;border-left:1px solid rgba(0,0,0,.085);border-top:1px solid rgba(0,0,0,.085);box-shadow:inset -1px -1px 0 rgba(255,255,255,.85)"><div class="l1" style="left:14px;top:11px">$120.00 | $200.00</div><div class="l2" style="left:14px;top:27px">$80.00 (66.67%)</div></div>
<div class="c N" style="left:724px;top:583px;width:158px;height:50px;border-left:1px solid rgba(0,0,0,.085);border-top:1px solid rgba(0,0,0,.085);box-shadow:inset -1px -1px 0 rgba(255,255,255,.85)"><div class="l1" style="left:13.5px;top:11px">$0.00 | $0.00</div><div class="l2" style="left:13.5px;top:27px">$0.00 (0.00%)</div></div>
<div class="c N" style="left:882px;top:583px;width:158px;height:50px;border-left:1px solid rgba(0,0,0,.085);border-top:1px solid rgba(0,0,0,.085);box-shadow:inset -1px -1px 0 rgba(255,255,255,.85)"><div class="l1" style="left:13.5px;top:11px">$0.00 | $0.00</div><div class="l2" style="left:13.5px;top:27px">$0.00 (0.00%)</div></div>
<div class="c G" style="left:1040px;top:583px;width:158px;height:50px;border-left:1px solid rgba(0,0,0,.085);border-top:1px solid rgba(0,0,0,.085);box-shadow:inset -1px -1px 0 rgba(255,255,255,.85)"><div class="l1" style="left:13.5px;top:11px">$120.00 | $200.00</div><div class="l2" style="left:13.5px;top:27px">$80.00 (66.67%)</div></div>
<div class="c R" style="left:1198px;top:583px;width:158px;height:50px;border-left:1px solid rgba(0,0,0,.085);border-top:1px solid rgba(0,0,0,.085);box-shadow:inset -1px -1px 0 rgba(255,255,255,.85)"><div class="l1" style="left:13.5px;top:11px">$120.00 | $0.00</div><div class="l2" style="left:10.5px;top:27px">-$120.00 (-100.00%)</div></div>
<div class="c N" style="left:1356px;top:583px;width:158px;height:50px;border-left:1px solid rgba(0,0,0,.085);border-top:1px solid rgba(0,0,0,.085);box-shadow:inset -1px -1px 0 rgba(255,255,255,.85)"><div class="l1" style="left:13.5px;top:11px">$120.00 | $120.00</div><div class="l2" style="left:13.5px;top:27px">$0.00 (0.00%)</div></div>
<div class="c N" style="left:1514px;top:583px;width:158px;height:50px;border-left:1px solid rgba(0,0,0,.085);border-top:1px solid rgba(0,0,0,.085);box-shadow:inset -1px -1px 0 rgba(255,255,255,.85)"><div class="l1" style="left:13.5px;top:11px">$120.00 | $120.00</div><div class="l2" style="left:13.5px;top:27px">$0.00 (0.00%)</div></div>
<div class="c N" style="left:1672px;top:583px;width:83px;height:50px;border-left:1px solid rgba(0,0,0,.085);border-top:1px solid rgba(0,0,0,.085);box-shadow:inset -1px -1px 0 rgba(255,255,255,.85)"><div class="l1" style="left:13.5px;top:11px">$120.00 | $120.00</div><div class="l2" style="left:13.5px;top:27px">$0.00 (0.00%)</div></div>
<div class="c G" style="left:250px;top:634px;width:157px;height:49px"><div class="l1" style="left:15px;top:11px">$1960.00 | $4300.00</div><div class="l2" style="left:15px;top:27px">$2340.00 (119.39%)</div></div>
<div class="c G" style="left:407px;top:633px;width:159px;height:50px;border-left:1px solid rgba(0,0,0,.085);border-top:1px solid rgba(0,0,0,.085);box-shadow:inset -1px -1px 0 rgba(255,255,255,.85)"><div class="l1" style="left:15px;top:11px">$80.00 | $100.00</div><div class="l2" style="left:15px;top:27px">$20.00 (25.00%)</div></div>
<div class="c G" style="left:566px;top:633px;width:158px;height:50px;border-left:1px solid rgba(0,0,0,.085);border-top:1px solid rgba(0,0,0,.085);box-shadow:inset -1px -1px 0 rgba(255,255,255,.85)"><div class="l1" style="left:14px;top:11px">$80.00 | $100.00</div><div class="l2" style="left:14px;top:27px">$20.00 (25.00%)</div></div>
<div class="c N" style="left:724px;top:633px;width:158px;height:50px;border-left:1px solid rgba(0,0,0,.085);border-top:1px solid rgba(0,0,0,.085);box-shadow:inset -1px -1px 0 rgba(255,255,255,.85)"><div class="l1" style="left:13.5px;top:11px">$0.00 | $0.00</div><div class="l2" style="left:13.5px;top:27px">$0.00 (0.00%)</div></div>
<div class="c N" style="left:882px;top:633px;width:158px;height:50px;border-left:1px solid rgba(0,0,0,.085);border-top:1px solid rgba(0,0,0,.085);box-shadow:inset -1px -1px 0 rgba(255,255,255,.85)"><div class="l1" style="left:13.5px;top:11px">$0.00 | $0.00</div><div class="l2" style="left:13.5px;top:27px">$0.00 (0.00%)</div></div>
<div class="c G" style="left:1040px;top:633px;width:158px;height:50px;border-left:1px solid rgba(0,0,0,.085);border-top:1px solid rgba(0,0,0,.085);box-shadow:inset -1px -1px 0 rgba(255,255,255,.85)"><div class="l1" style="left:13.5px;top:11px">$120.00 | $500.00</div><div class="l2" style="left:13.5px;top:27px">$380.00 (316.67%)</div></div>
<div class="c G" style="left:1198px;top:633px;width:158px;height:50px;border-left:1px solid rgba(0,0,0,.085);border-top:1px solid rgba(0,0,0,.085);box-shadow:inset -1px -1px 0 rgba(255,255,255,.85)"><div class="l1" style="left:13.5px;top:11px">$120.00 | $500.00</div><div class="l2" style="left:13.5px;top:27px">$380.00 (316.67%)</div></div>
<div class="c G" style="left:1356px;top:633px;width:158px;height:50px;border-left:1px solid rgba(0,0,0,.085);border-top:1px solid rgba(0,0,0,.085);box-shadow:inset -1px -1px 0 rgba(255,255,255,.85)"><div class="l1" style="left:13.5px;top:11px">$120.00 | $500.00</div><div class="l2" style="left:13.5px;top:27px">$380.00 (316.67%)</div></div>
<div class="c G" style="left:1514px;top:633px;width:158px;height:50px;border-left:1px solid rgba(0,0,0,.085);border-top:1px solid rgba(0,0,0,.085);box-shadow:inset -1px -1px 0 rgba(255,255,255,.85)"><div class="l1" style="left:13.5px;top:11px">$120.00 | $500.00</div><div class="l2" style="left:13.5px;top:27px">$380.00 (316.67%)</div></div>
<div class="c G" style="left:1672px;top:633px;width:83px;height:50px;border-left:1px solid rgba(0,0,0,.085);border-top:1px solid rgba(0,0,0,.085);box-shadow:inset -1px -1px 0 rgba(255,255,255,.85)"><div class="l1" style="left:13.5px;top:11px">$120.00 | $500.00</div><div class="l2" style="left:13.5px;top:27px">$380.00 (316.67%)</div></div>
<div class="c R" style="left:250px;top:684px;width:157px;height:49px"><div class="l1" style="left:15px;top:11px">$2640.00 | $1840.00</div><div class="l2" style="left:12px;top:27px">-$800.00 (-30.30%)</div></div>
<div class="c N" style="left:407px;top:683px;width:159px;height:50px;border-left:1px solid rgba(0,0,0,.085);border-top:1px solid rgba(0,0,0,.085);box-shadow:inset -1px -1px 0 rgba(255,255,255,.85)"><div class="l1" style="left:15px;top:11px">$120.00 | $120.00</div><div class="l2" style="left:15px;top:27px">$0.00 (0.00%)</div></div>
<div class="c N" style="left:566px;top:683px;width:158px;height:50px;border-left:1px solid rgba(0,0,0,.085);border-top:1px solid rgba(0,0,0,.085);box-shadow:inset -1px -1px 0 rgba(255,255,255,.85)"><div class="l1" style="left:14px;top:11px">$120.00 | $120.00</div><div class="l2" style="left:14px;top:27px">$0.00 (0.00%)</div></div>
<div class="c N" style="left:724px;top:683px;width:158px;height:50px;border-left:1px solid rgba(0,0,0,.085);border-top:1px solid rgba(0,0,0,.085);box-shadow:inset -1px -1px 0 rgba(255,255,255,.85)"><div class="l1" style="left:13.5px;top:11px">$0.00 | $0.00</div><div class="l2" style="left:13.5px;top:27px">$0.00 (0.00%)</div></div>
<div class="c N" style="left:882px;top:683px;width:158px;height:50px;border-left:1px solid rgba(0,0,0,.085);border-top:1px solid rgba(0,0,0,.085);box-shadow:inset -1px -1px 0 rgba(255,255,255,.85)"><div class="l1" style="left:13.5px;top:11px">$0.00 | $0.00</div><div class="l2" style="left:13.5px;top:27px">$0.00 (0.00%)</div></div>
<div class="c N" style="left:1040px;top:683px;width:158px;height:50px;border-left:1px solid rgba(0,0,0,.085);border-top:1px solid rgba(0,0,0,.085);box-shadow:inset -1px -1px 0 rgba(255,255,255,.85)"><div class="l1" style="left:13.5px;top:11px">$120.00 | $120.00</div><div class="l2" style="left:13.5px;top:27px">$0.00 (0.00%)</div></div>
<div class="c N" style="left:1198px;top:683px;width:158px;height:50px;border-left:1px solid rgba(0,0,0,.085);border-top:1px solid rgba(0,0,0,.085);box-shadow:inset -1px -1px 0 rgba(255,255,255,.85)"><div class="l1" style="left:13.5px;top:11px">$120.00 | $120.00</div><div class="l2" style="left:13.5px;top:27px">$0.00 (0.00%)</div></div>
<div class="c N" style="left:1356px;top:683px;width:158px;height:50px;border-left:1px solid rgba(0,0,0,.085);border-top:1px solid rgba(0,0,0,.085);box-shadow:inset -1px -1px 0 rgba(255,255,255,.85)"><div class="l1" style="left:13.5px;top:11px">$120.00 | $120.00</div><div class="l2" style="left:13.5px;top:27px">$0.00 (0.00%)</div></div>
<div class="c N" style="left:1514px;top:683px;width:158px;height:50px;border-left:1px solid rgba(0,0,0,.085);border-top:1px solid rgba(0,0,0,.085);box-shadow:inset -1px -1px 0 rgba(255,255,255,.85)"><div class="l1" style="left:13.5px;top:11px">$120.00 | $120.00</div><div class="l2" style="left:13.5px;top:27px">$0.00 (0.00%)</div></div>
<div class="c N" style="left:1672px;top:683px;width:83px;height:50px;border-left:1px solid rgba(0,0,0,.085);border-top:1px solid rgba(0,0,0,.085);box-shadow:inset -1px -1px 0 rgba(255,255,255,.85)"><div class="l1" style="left:13.5px;top:11px">$120.00 | $120.00</div><div class="l2" style="left:13.5px;top:27px">$0.00 (0.00%)</div></div>
<div class="c R" style="left:250px;top:734px;width:157px;height:49px"><div class="l1" style="left:15px;top:11px">$3520.00 | $2580.00</div><div class="l2" style="left:12px;top:27px">-$940.00 (-26.70%)</div></div>
<div class="c R" style="left:407px;top:733px;width:159px;height:50px;border-left:1px solid rgba(0,0,0,.085);border-top:1px solid rgba(0,0,0,.085);box-shadow:inset -1px -1px 0 rgba(255,255,255,.85)"><div class="l1" style="left:15px;top:11px">$160.00 | $0.00</div><div class="l2" style="left:12px;top:27px">-$160.00 (-100.00%)</div></div>
<div class="c R" style="left:566px;top:733px;width:158px;height:50px;border-left:1px solid rgba(0,0,0,.085);border-top:1px solid rgba(0,0,0,.085);box-shadow:inset -1px -1px 0 rgba(255,255,255,.85)"><div class="l1" style="left:14px;top:11px">$160.00 | $60.00</div><div class="l2" style="left:11px;top:27px">-$100.00 (-62.50%)</div></div>
<div class="c N" style="left:724px;top:733px;width:158px;height:50px;border-left:1px solid rgba(0,0,0,.085);border-top:1px solid rgba(0,0,0,.085);box-shadow:inset -1px -1px 0 rgba(255,255,255,.85)"><div class="l1" style="left:13.5px;top:11px">$0.00 | $0.00</div><div class="l2" style="left:13.5px;top:27px">$0.00 (0.00%)</div></div>
<div class="c N" style="left:882px;top:733px;width:158px;height:50px;border-left:1px solid rgba(0,0,0,.085);border-top:1px solid rgba(0,0,0,.085);box-shadow:inset -1px -1px 0 rgba(255,255,255,.85)"><div class="l1" style="left:13.5px;top:11px">$0.00 | $0.00</div><div class="l2" style="left:13.5px;top:27px">$0.00 (0.00%)</div></div>
<div class="c R" style="left:1040px;top:733px;width:158px;height:50px;border-left:1px solid rgba(0,0,0,.085);border-top:1px solid rgba(0,0,0,.085);box-shadow:inset -1px -1px 0 rgba(255,255,255,.85)"><div class="l1" style="left:13.5px;top:11px">$160.00 | $60.00</div><div class="l2" style="left:10.5px;top:27px">-$100.00 (-62.50%)</div></div>
<div class="c R" style="left:1198px;top:733px;width:158px;height:50px;border-left:1px solid rgba(0,0,0,.085);border-top:1px solid rgba(0,0,0,.085);box-shadow:inset -1px -1px 0 rgba(255,255,255,.85)"><div class="l1" style="left:13.5px;top:11px">$160.00 | $60.00</div><div class="l2" style="left:10.5px;top:27px">-$100.00 (-62.50%)</div></div>
<div class="c R" style="left:1356px;top:733px;width:158px;height:50px;border-left:1px solid rgba(0,0,0,.085);border-top:1px solid rgba(0,0,0,.085);box-shadow:inset -1px -1px 0 rgba(255,255,255,.85)"><div class="l1" style="left:13.5px;top:11px">$160.00 | $60.00</div><div class="l2" style="left:10.5px;top:27px">-$100.00 (-62.50%)</div></div>
<div class="c R" style="left:1514px;top:733px;width:158px;height:50px;border-left:1px solid rgba(0,0,0,.085);border-top:1px solid rgba(0,0,0,.085);box-shadow:inset -1px -1px 0 rgba(255,255,255,.85)"><div class="l1" style="left:13.5px;top:11px">$160.00 | $60.00</div><div class="l2" style="left:10.5px;top:27px">-$100.00 (-62.50%)</div></div>
<div class="c G" style="left:1672px;top:733px;width:83px;height:50px;border-left:1px solid rgba(0,0,0,.085);border-top:1px solid rgba(0,0,0,.085);box-shadow:inset -1px -1px 0 rgba(255,255,255,.85)"><div class="l1" style="left:13.5px;top:11px">$160.00 | $300.00</div><div class="l2" style="left:13.5px;top:27px">$140.00 (87.50%)</div></div>
<div class="c G" style="left:250px;top:784px;width:157px;height:49px"><div class="l1" style="left:15px;top:11px">$1760.00 | $4160.00</div><div class="l2" style="left:15px;top:27px">$2400.00 (136.36%)</div></div>
<div class="c G" style="left:407px;top:783px;width:159px;height:50px;border-left:1px solid rgba(0,0,0,.085);border-top:1px solid rgba(0,0,0,.085);box-shadow:inset -1px -1px 0 rgba(255,255,255,.85)"><div class="l1" style="left:15px;top:11px">$80.00 | $320.00</div><div class="l2" style="left:15px;top:27px">$240.00 (300.00%)</div></div>
<div class="c G" style="left:566px;top:783px;width:158px;height:50px;border-left:1px solid rgba(0,0,0,.085);border-top:1px solid rgba(0,0,0,.085);box-shadow:inset -1px -1px 0 rgba(255,255,255,.85)"><div class="l1" style="left:14px;top:11px">$80.00 | $320.00</div><div class="l2" style="left:14px;top:27px">$240.00 (300.00%)</div></div>
<div class="c N" style="left:724px;top:783px;width:158px;height:50px;border-left:1px solid rgba(0,0,0,.085);border-top:1px solid rgba(0,0,0,.085);box-shadow:inset -1px -1px 0 rgba(255,255,255,.85)"><div class="l1" style="left:13.5px;top:11px">$0.00 | $0.00</div><div class="l2" style="left:13.5px;top:27px">$0.00 (0.00%)</div></div>
<div class="c N" style="left:882px;top:783px;width:158px;height:50px;border-left:1px solid rgba(0,0,0,.085);border-top:1px solid rgba(0,0,0,.085);box-shadow:inset -1px -1px 0 rgba(255,255,255,.85)"><div class="l1" style="left:13.5px;top:11px">$0.00 | $0.00</div><div class="l2" style="left:13.5px;top:27px">$0.00 (0.00%)</div></div>
<div class="c G" style="left:1040px;top:783px;width:158px;height:50px;border-left:1px solid rgba(0,0,0,.085);border-top:1px solid rgba(0,0,0,.085);box-shadow:inset -1px -1px 0 rgba(255,255,255,.85)"><div class="l1" style="left:13.5px;top:11px">$80.00 | $320.00</div><div class="l2" style="left:13.5px;top:27px">$240.00 (300.00%)</div></div>
<div class="c G" style="left:1198px;top:783px;width:158px;height:50px;border-left:1px solid rgba(0,0,0,.085);border-top:1px solid rgba(0,0,0,.085);box-shadow:inset -1px -1px 0 rgba(255,255,255,.85)"><div class="l1" style="left:13.5px;top:11px">$80.00 | $320.00</div><div class="l2" style="left:13.5px;top:27px">$240.00 (300.00%)</div></div>
<div class="c R" style="left:1356px;top:783px;width:158px;height:50px;border-left:1px solid rgba(0,0,0,.085);border-top:1px solid rgba(0,0,0,.085);box-shadow:inset -1px -1px 0 rgba(255,255,255,.85)"><div class="l1" style="left:13.5px;top:11px">$80.00 | $0.00</div><div class="l2" style="left:10.5px;top:27px">-$80.00 (-100.00%)</div></div>
<div class="c G" style="left:1514px;top:783px;width:158px;height:50px;border-left:1px solid rgba(0,0,0,.085);border-top:1px solid rgba(0,0,0,.085);box-shadow:inset -1px -1px 0 rgba(255,255,255,.85)"><div class="l1" style="left:13.5px;top:11px">$80.00 | $600.00</div><div class="l2" style="left:13.5px;top:27px">$520.00 (650.00%)</div></div>
<div class="c G" style="left:1672px;top:783px;width:83px;height:50px;border-left:1px solid rgba(0,0,0,.085);border-top:1px solid rgba(0,0,0,.085);box-shadow:inset -1px -1px 0 rgba(255,255,255,.85)"><div class="l1" style="left:13.5px;top:11px">$80.00 | $600.00</div><div class="l2" style="left:13.5px;top:27px">$520.00 (650.00%)</div></div>
<div class="c R" style="left:250px;top:834px;width:157px;height:49px"><div class="l1" style="left:15px;top:11px">$3520.00 | $2220.00</div><div class="l2" style="left:12px;top:27px">-$1300.00 (-36.93%)</div></div>
<div class="c R" style="left:407px;top:833px;width:159px;height:50px;border-left:1px solid rgba(0,0,0,.085);border-top:1px solid rgba(0,0,0,.085);box-shadow:inset -1px -1px 0 rgba(255,255,255,.85)"><div class="l1" style="left:15px;top:11px">$160.00 | $0.00</div><div class="l2" style="left:12px;top:27px">-$160.00 (-100.00%)</div></div>
<div class="c R" style="left:566px;top:833px;width:158px;height:50px;border-left:1px solid rgba(0,0,0,.085);border-top:1px solid rgba(0,0,0,.085);box-shadow:inset -1px -1px 0 rgba(255,255,255,.85)"><div class="l1" style="left:14px;top:11px">$160.00 | $0.00</div><div class="l2" style="left:11px;top:27px">-$160.00 (-100.00%)</div></div>
<div class="c N" style="left:724px;top:833px;width:158px;height:50px;border-left:1px solid rgba(0,0,0,.085);border-top:1px solid rgba(0,0,0,.085);box-shadow:inset -1px -1px 0 rgba(255,255,255,.85)"><div class="l1" style="left:13.5px;top:11px">$0.00 | $0.00</div><div class="l2" style="left:13.5px;top:27px">$0.00 (0.00%)</div></div>
<div class="c N" style="left:882px;top:833px;width:158px;height:50px;border-left:1px solid rgba(0,0,0,.085);border-top:1px solid rgba(0,0,0,.085);box-shadow:inset -1px -1px 0 rgba(255,255,255,.85)"><div class="l1" style="left:13.5px;top:11px">$0.00 | $0.00</div><div class="l2" style="left:13.5px;top:27px">$0.00 (0.00%)</div></div>
<div class="c R" style="left:1040px;top:833px;width:158px;height:50px;border-left:1px solid rgba(0,0,0,.085);border-top:1px solid rgba(0,0,0,.085);box-shadow:inset -1px -1px 0 rgba(255,255,255,.85)"><div class="l1" style="left:13.5px;top:11px">$160.00 | $0.00</div><div class="l2" style="left:10.5px;top:27px">-$160.00 (-100.00%)</div></div>
<div class="c R" style="left:1198px;top:833px;width:158px;height:50px;border-left:1px solid rgba(0,0,0,.085);border-top:1px solid rgba(0,0,0,.085);box-shadow:inset -1px -1px 0 rgba(255,255,255,.85)"><div class="l1" style="left:13.5px;top:11px">$160.00 | $0.00</div><div class="l2" style="left:10.5px;top:27px">-$160.00 (-100.00%)</div></div>
<div class="c G" style="left:1356px;top:833px;width:158px;height:50px;border-left:1px solid rgba(0,0,0,.085);border-top:1px solid rgba(0,0,0,.085);box-shadow:inset -1px -1px 0 rgba(255,255,255,.85)"><div class="l1" style="left:13.5px;top:11px">$160.00 | $200.00</div><div class="l2" style="left:13.5px;top:27px">$40.00 (25.00%)</div></div>
<div class="c G" style="left:1514px;top:833px;width:158px;height:50px;border-left:1px solid rgba(0,0,0,.085);border-top:1px solid rgba(0,0,0,.085);box-shadow:inset -1px -1px 0 rgba(255,255,255,.85)"><div class="l1" style="left:13.5px;top:11px">$160.00 | $200.00</div><div class="l2" style="left:13.5px;top:27px">$40.00 (25.00%)</div></div>
<div class="c G" style="left:1672px;top:833px;width:83px;height:50px;border-left:1px solid rgba(0,0,0,.085);border-top:1px solid rgba(0,0,0,.085);box-shadow:inset -1px -1px 0 rgba(255,255,255,.85)"><div class="l1" style="left:13.5px;top:11px">$160.00 | $200.00</div><div class="l2" style="left:13.5px;top:27px">$40.00 (25.00%)</div></div>
<div class="c N" style="left:250px;top:884px;width:157px;height:7px"></div>
<div class="c G" style="left:407px;top:883px;width:159px;height:8px;border-left:1px solid rgba(0,0,0,.085);border-top:1px solid rgba(0,0,0,.085)"></div>
<div class="c G" style="left:566px;top:883px;width:158px;height:8px;border-left:1px solid rgba(0,0,0,.085);border-top:1px solid rgba(0,0,0,.085)"></div>
<div class="c N" style="left:724px;top:883px;width:158px;height:8px;border-left:1px solid rgba(0,0,0,.085);border-top:1px solid rgba(0,0,0,.085)"></div>
<div class="c N" style="left:882px;top:883px;width:158px;height:8px;border-left:1px solid rgba(0,0,0,.085);border-top:1px solid rgba(0,0,0,.085)"></div>
<div class="c G" style="left:1040px;top:883px;width:158px;height:8px;border-left:1px solid rgba(0,0,0,.085);border-top:1px solid rgba(0,0,0,.085)"></div>
<div class="c R" style="left:1198px;top:883px;width:158px;height:8px;border-left:1px solid rgba(0,0,0,.085);border-top:1px solid rgba(0,0,0,.085)"></div>
<div class="c R" style="left:1356px;top:883px;width:158px;height:8px;border-left:1px solid rgba(0,0,0,.085);border-top:1px solid rgba(0,0,0,.085)"></div>
<div class="c R" style="left:1514px;top:883px;width:158px;height:8px;border-left:1px solid rgba(0,0,0,.085);border-top:1px solid rgba(0,0,0,.085)"></div>
<div class="c R" style="left:1672px;top:883px;width:83px;height:8px;border-left:1px solid rgba(0,0,0,.085);border-top:1px solid rgba(0,0,0,.085)"></div>
<div class="ln" style="left:1px;top:146px;width:1754px;height:1px"></div>
<div class="ln" style="left:1px;top:183px;width:1754px;height:1px"></div>
<div class="ln" style="left:1px;top:232px;width:1754px;height:1px"></div>
<div class="ln" style="left:1px;top:283px;width:407px;height:1px"></div>
<div class="ln" style="left:1px;top:333px;width:407px;height:1px"></div>
<div class="ln" style="left:1px;top:383px;width:407px;height:1px"></div>
<div class="ln" style="left:1px;top:433px;width:407px;height:1px"></div>
<div class="ln" style="left:1px;top:483px;width:407px;height:1px"></div>
<div class="ln" style="left:1px;top:533px;width:407px;height:1px"></div>
<div class="ln" style="left:1px;top:583px;width:407px;height:1px"></div>
<div class="ln" style="left:1px;top:633px;width:407px;height:1px"></div>
<div class="ln" style="left:1px;top:683px;width:407px;height:1px"></div>
<div class="ln" style="left:1px;top:733px;width:407px;height:1px"></div>
<div class="ln" style="left:1px;top:783px;width:407px;height:1px"></div>
<div class="ln" style="left:1px;top:833px;width:407px;height:1px"></div>
<div class="ln" style="left:1px;top:883px;width:407px;height:1px"></div>
<div class="ln" style="left:249px;top:146px;width:1px;height:745px"></div>
<div class="ln" style="left:407px;top:146px;width:1px;height:745px"></div>
<div class="ln" style="left:566px;top:146px;width:1px;height:87px"></div>
<div class="ln" style="left:724px;top:146px;width:1px;height:87px"></div>
<div class="ln" style="left:882px;top:146px;width:1px;height:87px"></div>
<div class="ln" style="left:1040px;top:146px;width:1px;height:87px"></div>
<div class="ln" style="left:1198px;top:146px;width:1px;height:87px"></div>
<div class="ln" style="left:1356px;top:146px;width:1px;height:87px"></div>
<div class="ln" style="left:1514px;top:146px;width:1px;height:87px"></div>
<div class="ln" style="left:1672px;top:146px;width:1px;height:87px"></div>
<div class="ln" style="left:1755px;top:146px;width:1px;height:745px"></div>
<div class="tx" style="left:15px;top:156px;font-size:14px;line-height:16px;font-weight:bold;color:#3a3a3a">Resources</div>
<div class="hd" style="left:264px">Financial</div>
<div class="hd" style="left:422px">Thu, 1 Aug</div>
<div class="hd" style="left:580px">Fri, 2 Aug</div>
<div class="hd" style="left:737.5px">Sat, 3 Aug</div>
<div class="hd" style="left:895.5px">Sun, 4 Aug</div>
<div class="hd" style="left:1053.5px">Mon, 5 Aug</div>
<div class="hd" style="left:1211.5px">Tue, 6 Aug</div>
<div class="hd" style="left:1369.5px">Wed, 7 Aug</div>
<div class="hd" style="left:1527.5px">Thu, 8 Aug</div>
<div class="hd" style="left:1685.5px">Fri, 9 Aug</div>
<div class="tx" style="left:150px;top:198.5px;width:87px;text-align:right;font-size:14px;line-height:16px;font-weight:bold;color:#3a3a3a">Total</div>
<svg class="a" style="left:14px;top:250px" width="10" height="6"><path d="M0.5 0.5 L9 0.5 L4.75 5 Z" fill="#555"/></svg>
<div class="a" style="left:32px;top:241px;width:35px;height:35px"><svg width="35" height="35" viewBox="0 0 35 35"><rect width="35" height="35" fill="#14110d"/><path d="M0 20 Q6 18 8 26 L9 35 L0 35Z" fill="#4a4028" opacity=".8"/><path d="M27 18 Q33 20 35 24 L35 35 L28 35Z" fill="#4e4530" opacity=".8"/><path d="M6 3 L9 18 M28 2 L31 14" stroke="#555" stroke-width="1.5" opacity=".7"/><rect x="14" y="27" width="12" height="8" fill="#e08a55"/><ellipse cx="18.5" cy="19" rx="7.5" ry="10" fill="#d98c62"/><path d="M10 16 Q9 6 18 5.5 Q27 6 27 16 Q25 9 18 9 Q12 9 10 16Z" fill="#0d0b08"/><path d="M15 23 Q18.5 26 22 23" stroke="#f4f0ea" stroke-width="1.6" fill="none"/></svg></div>
<div class="nm" style="top:245px">Amit Sharma</div>
<div class="ti" style="top:261px">Consultant</div>
<div class="a" style="left:46px;top:291px;width:35px;height:35px;background:#f4f5f5"></div>
<svg class="a" style="left:46px;top:291px" width="35" height="35"><path d="M14.5 23.1 V11.7 H19.5 Q22.6 11.7 22.6 14.6 Q22.6 17.5 19.5 17.5 H14.5" fill="none" stroke="#bdbdbd" stroke-width="1.1"/></svg>
<div class="nm" style="left:87px;top:295px">Project B</div>
<div class="a" style="left:46px;top:341px;width:35px;height:35px;background:#f4f5f5"></div>
<svg class="a" style="left:46px;top:341px" width="35" height="35"><path d="M14.5 23.1 V11.7 H19.5 Q22.6 11.7 22.6 14.6 Q22.6 17.5 19.5 17.5 H14.5" fill="none" stroke="#bdbdbd" stroke-width="1.1"/></svg>
<div class="nm" style="left:87px;top:345px">Project C</div>
<div class="a" style="left:46px;top:391px;width:35px;height:35px;background:#f4f5f5"></div>
<svg class="a" style="left:46px;top:391px" width="35" height="35"><path d="M14.5 23.1 V11.7 H19.5 Q22.6 11.7 22.6 14.6 Q22.6 17.5 19.5 17.5 H14.5" fill="none" stroke="#bdbdbd" stroke-width="1.1"/></svg>
<div class="nm" style="left:87px;top:395px">Project D</div>
<div class="a" style="left:46px;top:441px;width:35px;height:35px;background:#f4f5f5"></div>
<svg class="a" style="left:46px;top:441px" width="35" height="35"><rect x="9" y="8.9" width="18" height="2.9" fill="#c4c4c4"/><rect x="9" y="14.1" width="18" height="1.7" fill="#c4c4c4"/><rect x="8" y="17.9" width="20.3" height="2" fill="#c4c4c4"/><rect x="6" y="15" width="2.2" height="9.8" fill="#c4c4c4"/><rect x="28.3" y="15" width="2.4" height="9.8" fill="#c4c4c4"/></svg>
<div class="nm" style="left:87px;top:445px;color:#aaa">Bench</div>
<svg class="a" style="left:16px;top:498px" width="6" height="10"><path d="M0.5 0.5 L5 4.75 L0.5 9 Z" fill="#555"/></svg>
<div class="a" style="left:32px;top:491px;width:35px;height:35px"><svg width="35" height="35" viewBox="0 0 35 35"><rect width="35" height="35" fill="#e6e2dc"/><rect y="16" width="35" height="19" fill="#d9b9a8"/><path d="M0 35 Q2 24 12 22 L24 22 Q33 24 35 35Z" fill="#3d3f3b"/><ellipse cx="19" cy="13" rx="6.5" ry="8.5" fill="#b08e7a"/><path d="M12 11 Q12 2 19 2 Q26 2 26 10 Q24 6 19 6 Q14 6 12 11Z" fill="#6a6055"/><path d="M15 17 Q19 19.5 23 17" stroke="#eee" stroke-width="1.2" fill="none"/></svg></div>
<div class="nm" style="top:495px">Andy Murray</div>
<div class="ti" style="top:511px">Accountant</div>
<svg class="a" style="left:16px;top:548px" width="6" height="10"><path d="M0.5 0.5 L5 4.75 L0.5 9 Z" fill="#555"/></svg>
<div class="a" style="left:32px;top:541px;width:35px;height:35px"><svg width="35" height="35" viewBox="0 0 35 35"><rect width="35" height="35" fill="#c98a74"/><path d="M8 30 Q7 8 18 4 Q29 6 29 30Z" fill="#5c3323"/><path d="M0 35 Q1 26 12 25 L24 25 Q34 26 35 35Z" fill="#4f2a1e"/><ellipse cx="18.5" cy="15.5" rx="7" ry="9" fill="#e1bba8"/><path d="M11.5 13 H25.5" stroke="#6a4a3a" stroke-width="1" opacity=".7"/></svg></div>
<div class="nm" style="top:545px">Barbara Lopez</div>
<div class="ti" style="top:561px">Business Development Manager</div>
<svg class="a" style="left:16px;top:598px" width="6" height="10"><path d="M0.5 0.5 L5 4.75 L0.5 9 Z" fill="#555"/></svg>
<div class="a" style="left:32px;top:591px;width:35px;height:35px"><svg width="35" height="35" viewBox="0 0 35 35"><rect width="35" height="35" fill="#d4d4d6"/><path d="M0 35 Q1 27 10 25 L25 25 Q34 27 35 35Z" fill="#c8c8c8"/><path d="M12 25 L17.5 29 L23 25 L21 35 L14 35Z" fill="#f0f0f0"/><path d="M16.5 27 L18.5 27 L19.5 35 L15.5 35Z" fill="#3a2a2a"/><ellipse cx="17.5" cy="14" rx="7" ry="9" fill="#c9a08a"/><path d="M10 13 Q9 3 17.5 3 Q26 3 25 13 Q23 7 17.5 7 Q12 7 10 13Z" fill="#2e241e"/></svg></div>
<div class="nm" style="top:595px">Blake Allan</div>
<div class="ti" style="top:611px">Advisor</div>
<svg class="a" style="left:16px;top:648px" width="6" height="10"><path d="M0.5 0.5 L5 4.75 L0.5 9 Z" fill="#555"/></svg>
<div class="a" style="left:32px;top:641px;width:35px;height:35px"><svg width="35" height="35" viewBox="0 0 35 35"><rect width="35" height="35" fill="#141210"/><path d="M0 35 Q3 28 11 27 L24 27 Q32 28 35 35Z" fill="#a9c0de"/><rect x="12" y="24" width="11" height="8" fill="#c89078"/><ellipse cx="17.5" cy="15" rx="10" ry="12.5" fill="#dba48a"/><path d="M8 11 Q8 1 17.5 1.5 Q27 1 27 11 Q25 5 17.5 5 Q10 5 8 11Z" fill="#7a5a44"/><path d="M13 21 Q17.5 24 22 21" stroke="#f6f6f6" stroke-width="1.6" fill="none"/></svg></div>
<div class="nm" style="top:645px">Bob Van Kal</div>
<div class="ti" style="top:661px">Advisor</div>
<svg class="a" style="left:16px;top:698px" width="6" height="10"><path d="M0.5 0.5 L5 4.75 L0.5 9 Z" fill="#555"/></svg>
<div class="a" style="left:32px;top:691px;width:35px;height:35px"><svg width="35" height="35" viewBox="0 0 35 35"><rect width="35" height="35" fill="#505050"/><path d="M0 35 Q2 26 10 24 L25 24 Q33 26 35 35Z" fill="#111"/><ellipse cx="17.5" cy="16" rx="8" ry="10" fill="#c9a08c"/><path d="M9 13 Q9 3 17.5 3 Q26 3 26 13 Q24 7 17.5 7 Q11 7 9 13Z" fill="#3a2e26"/><path d="M10.5 14.5 H24.5" stroke="#222" stroke-width="1.6"/></svg></div>
<div class="nm" style="top:695px">Charles Baker</div>
<div class="ti" style="top:711px">Accountant</div>
<svg class="a" style="left:16px;top:748px" width="6" height="10"><path d="M0.5 0.5 L5 4.75 L0.5 9 Z" fill="#555"/></svg>
<div class="a" style="left:32px;top:741px;width:35px;height:35px"><svg width="35" height="35" viewBox="0 0 35 35"><rect width="35" height="35" fill="#e9e8e8"/><path d="M6 33 Q5 10 12 4 Q20 -1 27 4 Q33 12 33 33 L26 35 L10 35Z" fill="#5a3626"/><ellipse cx="18.5" cy="16" rx="6" ry="9" fill="#e2c0ae"/><path d="M12 35 Q14 28 18 27 Q23 28 26 35Z" fill="#2a1e1c"/><path d="M11 8 Q18 3 26 10 Q22 6 16 8Z" fill="#4a2a1a"/></svg></div>
<div class="nm" style="top:745px">Donna Morrison</div>
<div class="ti" style="top:761px">Finance Executive</div>
<svg class="a" style="left:16px;top:798px" width="6" height="10"><path d="M0.5 0.5 L5 4.75 L0.5 9 Z" fill="#555"/></svg>
<div class="a" style="left:32px;top:791px;width:35px;height:35px"><svg width="35" height="35" viewBox="0 0 35 35"><rect width="35" height="35" fill="#3c3c3c"/><rect x="22" width="13" height="35" fill="#5a5a5a" opacity=".6"/><path d="M0 35 Q2 29 10 28 L25 28 Q33 29 35 35Z" fill="#1a1a1a"/><ellipse cx="17" cy="17" rx="9" ry="11.5" fill="#b48a72"/><path d="M7 14 Q7 3 17 3 Q27 3 27 14 Q25 7 17 7 Q10 7 7 14Z" fill="#1a1512"/></svg></div>
<div class="nm" style="top:795px">Dylan Clark</div>
<div class="ti" style="top:811px">Advisor</div>
<svg class="a" style="left:16px;top:848px" width="6" height="10"><path d="M0.5 0.5 L5 4.75 L0.5 9 Z" fill="#555"/></svg>
<div class="a" style="left:32px;top:841px;width:35px;height:35px"><svg width="35" height="35" viewBox="0 0 35 35"><rect width="35" height="35" fill="#dedede"/><path d="M2 35 Q4 27 13 25 L31 25 Q35 28 35 35Z" fill="#161618"/><path d="M17 25 L22 29 L27 25 L25 35 L19 35Z" fill="#f4f4f4"/><ellipse cx="22" cy="14" rx="6.5" ry="9" fill="#c8a28c"/><path d="M15 12 Q15 3 22 3 Q29 3 29 12 Q27 6.5 22 6.5 Q17 6.5 15 12Z" fill="#231c18"/><path d="M16.5 18 Q22 24 27.5 18 L27 21 Q22 26 17 21Z" fill="#4a3a30"/></svg></div>
<div class="nm" style="top:845px">Gordon Brown</div>
<div class="ti" style="top:861px">Finance Executive</div>
<div class="a" style="left:32px;top:891px;width:35px;height:1px;background:#1a1510"></div>
<div class="a" style="left:1756px;top:233px;width:8px;height:658px;background:#dfdeee"></div>
<div class="a" style="left:1756px;top:233px;width:8px;height:483px;background:#b7b5dc"></div>
<div class="a" style="left:407px;top:891px;width:1349px;height:7px;background:#dddcec"></div>
<div class="a" style="left:408px;top:891px;width:371px;height:7px;background:#b7b5dc"></div>
<div class="a" style="left:0;top:891px;width:407px;height:7px;background:#fff"></div>
<div class="tx" style="left:608px;top:769px;font-size:57px;line-height:60px;font-weight:bold;color:rgba(100,100,100,0.16);letter-spacing:0.3px">SoftwareSuggest<span style="font-size:33px;letter-spacing:0">.com</span></div>
</body></html>
